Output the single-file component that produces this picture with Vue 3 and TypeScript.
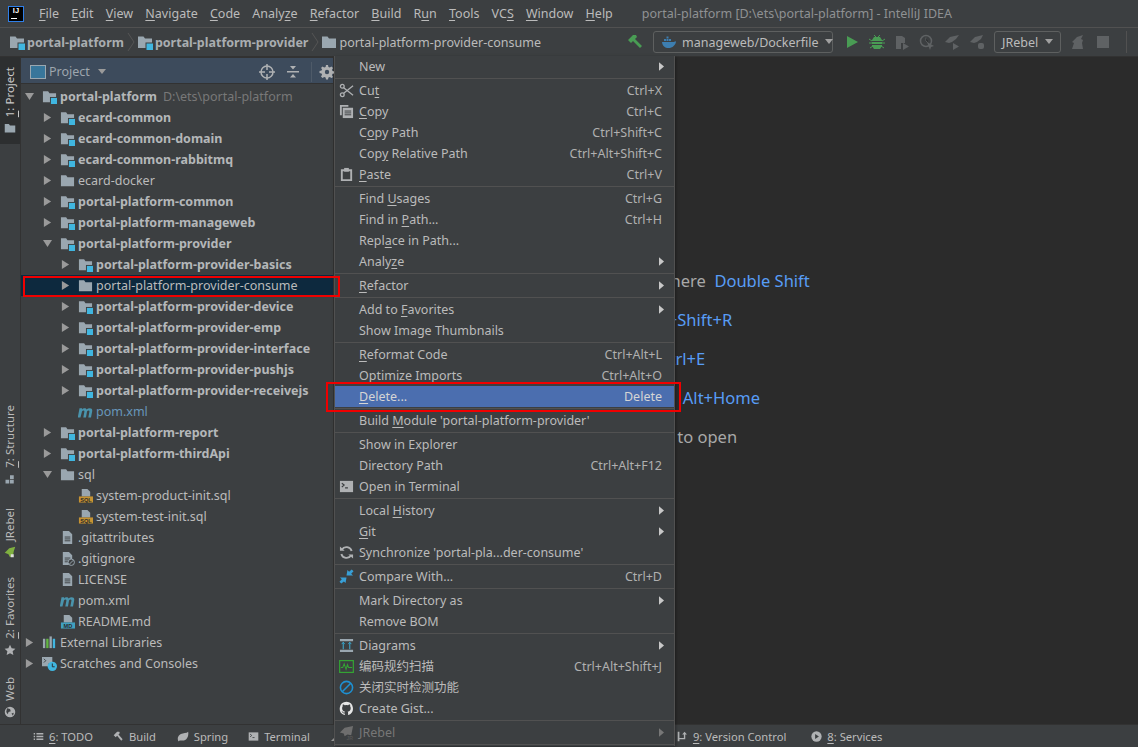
<script setup lang="ts">
// IntelliJ IDEA window with the project tree context menu open

const folder = '<path fill="#9aa7b0" d="M1 2.5h5.500l1.500 2h7V14H1z"/>'
const moduleDir = folder + '<rect x="8.500" y="8.500" width="7.500" height="7.500" fill="#3c3f41"/><rect x="9.500" y="9.500" width="6.500" height="6.500" fill="#40b6e0"/>'
const fileShape = '<path fill="#9aa7b0" d="M3 1h6.500L13 4.500V15H3z"/><path stroke="#3c3f41" d="M5 7.500h6M5 9.500h6M5 11.500h6"/>'
const tagged = (label: string, bg: string) =>
  `<path fill="#9aa7b0" d="M4 1h6l3 3v5H4z"/><rect x="1" y="9" width="15" height="6.500" fill="${bg}"/><text x="8.500" y="14.400" font-size="6" font-weight="700" text-anchor="middle" fill="#2b2b2b" font-family="Liberation Sans, sans-serif">${label}</text>`

const icons: Record<string, string> = {
  folder,
  module: moduleDir,
  file: fileShape,
  ignore: fileShape + '<circle cx="12" cy="12" r="3.400" fill="#3c3f41" stroke="#9aa7b0"/><path stroke="#9aa7b0" d="M9.800 14.200l4.400-4.400"/>',
  sql: tagged('SQL', '#c69332'),
  md: tagged('MD', '#40a0c0'),
  maven: '<path transform="translate(-1.500 -1.800) scale(1.250)" fill="#4a94ad" d="M1 13L2.500 5h2.300l-.2 1.100C5.300 5.300 6 5 6.800 5c.9 0 1.500.4 1.700 1.200C9.300 5.400 10.200 5 11.200 5c1.600 0 2.400 1 2.100 2.700L12.300 13H10l.9-4.800c.2-.8-.1-1.200-.7-1.200-.5 0-1 .3-1.300.8L8 13H5.700l.9-4.800c.2-.8-.1-1.200-.7-1.200-.5 0-1 .3-1.300.8L3.300 13z"/>',
  libs: '<path fill="#9aa7b0" d="M1 4h2.500v10H1z"/><path fill="#62b543" d="M4.500 4H7v10H4.500z"/><path fill="#9aa7b0" d="M8 1.500h2.500V14H8z"/><path fill="#40b6e0" d="M11.500 4H14v10h-2.500z"/>',
  scratch: '<path fill="#9aa7b0" d="M0 1h11v7H7v3H0z"/><path stroke="#3c3f41" fill="none" d="M2 3l2 2-2 2"/><circle cx="11" cy="11" r="5" fill="#40b6e0"/><path stroke="#2b2b2b" fill="none" d="M11 8v3.500h2.500"/>',
  cut: '<g fill="none" stroke="#afb1b3" stroke-width="1.400"><circle cx="3.500" cy="3.500" r="2"/><circle cx="3.500" cy="12.500" r="2"/><path d="M5 5l10 8M5 11L15 3"/></g>',
  copy: '<path fill="#afb1b3" d="M1 1h9v2H3v9H1z"/><path fill="#afb1b3" d="M4 4h11v11H4z"/><path stroke="#3c3f41" d="M6 7.500h7M6 9.500h7M6 11.500h7"/>',
  paste: '<path fill="none" stroke="#afb1b3" stroke-width="2" d="M3 3.500h10V14H3z"/><path fill="#afb1b3" d="M5.500 1h5v4h-5z"/>',
  terminal: '<rect x="1" y="2" width="14" height="12" fill="#afb1b3"/><path stroke="#3c3f41" stroke-width="1.200" fill="none" d="M3 4.500l2.500 2L3 8.500M6.500 9.500h3"/>',
  sync: '<g fill="none" stroke="#afb1b3" stroke-width="2"><path d="M13.500 6.500A5.800 5.800 0 0 0 3 5M2.500 9.500A5.800 5.800 0 0 0 13 11"/></g><path fill="#afb1b3" d="M1 1.500l5 4.500H1zM15 14.500L10 10h5z"/>',
  compare: '<g fill="#389fd6"><path d="M8 7l1-6 1.800 1.800L13.500.5 15.500 2.500 13 5l2 2z"/><path d="M8 9l-1 6-1.800-1.800L2.500 15.500.5 13.500 3 11 1 9z"/></g>',
  diagram: '<path fill="#9aa7b0" d="M1 1h14v2.500H1zM1 12.500h14V15H1z"/><path stroke="#40b6e0" d="M4.500 5v7M11.500 5v7M3 6.500l1.500-2 1.500 2M10 6.500l1.500-2 1.500 2"/>',
  scan: '<rect x=".7" y="1.700" width="14.600" height="12.600" fill="none" stroke="#34a334" stroke-width="1.300"/><path fill="none" stroke="#34a334" stroke-width="1.100" d="M2 9h2l1.500-4L7.500 11l1.500-5 1.200 3H14"/>',
  ban: '<circle cx="8" cy="8" r="6.500" fill="none" stroke="#1e90d2" stroke-width="1.700"/><path stroke="#1e90d2" stroke-width="1.700" d="M3.500 12.500l9-9"/>',
  github: '<path fill="#e6e6e6" d="M8 .8a7.300 7.300 0 0 0-2.300 14.200c.4.100.5-.2.5-.4v-1.300c-2 .4-2.500-1-2.500-1-.3-.8-.8-1-.8-1-.7-.4 0-.4 0-.4.700 0 1.100.7 1.100.7.600 1.100 1.700.8 2.100.6.100-.5.300-.8.500-1-1.600-.2-3.300-.8-3.300-3.600 0-.8.300-1.500.7-2-.1-.2-.3-.9.100-1.900 0 0 .6-.2 2 .7a7 7 0 0 1 3.600 0c1.400-.9 2-.7 2-.7.400 1 .2 1.700.1 1.900.5.500.7 1.200.7 2 0 2.800-1.700 3.400-3.300 3.600.3.200.5.700.5 1.300v2c0 .2.100.5.500.4A7.300 7.300 0 0 0 8 .8z"/>',
  rebel: '<path fill="#6e6e6e" d="M15 1L6 3 1 8l4 1 1 3 3-2 4 1z"/><text x="8" y="15.500" font-size="5.500" fill="#555" font-weight="700" font-family="Liberation Sans, sans-serif">JR</text>',
}

const menuBar = [
  ['File', 0], ['Edit', 0], ['View', 0], ['Navigate', 0], ['Code', 0], ['Analyze', 5],
  ['Refactor', 0], ['Build', 0], ['Run', 1], ['Tools', 0], ['VCS', 2], ['Window', 0], ['Help', 0],
] as [string, number][]

interface TreeRow { label: string; level: number; icon: string; open?: boolean; closed?: boolean; bold?: boolean; hint?: string; selected?: boolean; blue?: boolean }

const closedModule = (label: string, level: number): TreeRow => ({ label, level, icon: 'module', closed: true, bold: true })

const tree: TreeRow[] = [
  { label: 'portal-platform', level: 0, icon: 'module', open: true, bold: true, hint: 'D:\\ets\\portal-platform' },
  closedModule('ecard-common', 1),
  closedModule('ecard-common-domain', 1),
  closedModule('ecard-common-rabbitmq', 1),
  { label: 'ecard-docker', level: 1, icon: 'folder', closed: true },
  closedModule('portal-platform-common', 1),
  closedModule('portal-platform-manageweb', 1),
  { label: 'portal-platform-provider', level: 1, icon: 'module', open: true, bold: true },
  closedModule('portal-platform-provider-basics', 2),
  { label: 'portal-platform-provider-consume', level: 2, icon: 'folder', closed: true, selected: true },
  closedModule('portal-platform-provider-device', 2),
  closedModule('portal-platform-provider-emp', 2),
  closedModule('portal-platform-provider-interface', 2),
  closedModule('portal-platform-provider-pushjs', 2),
  closedModule('portal-platform-provider-receivejs', 2),
  { label: 'pom.xml', level: 2, icon: 'maven', blue: true },
  closedModule('portal-platform-report', 1),
  closedModule('portal-platform-thirdApi', 1),
  { label: 'sql', level: 1, icon: 'folder', open: true },
  { label: 'system-product-init.sql', level: 2, icon: 'sql' },
  { label: 'system-test-init.sql', level: 2, icon: 'sql' },
  { label: '.gitattributes', level: 1, icon: 'file' },
  { label: '.gitignore', level: 1, icon: 'ignore' },
  { label: 'LICENSE', level: 1, icon: 'file' },
  { label: 'pom.xml', level: 1, icon: 'maven' },
  { label: 'README.md', level: 1, icon: 'md' },
  { label: 'External Libraries', level: 0, icon: 'libs', closed: true },
  { label: 'Scratches and Consoles', level: 0, icon: 'scratch', closed: true },
]

interface MenuRow { label?: string; key?: number; keys?: string; icon?: string; sub?: boolean; active?: boolean; off?: boolean; sep?: boolean }

const sep: MenuRow = { sep: true }
const contextMenu: MenuRow[] = [
  { label: 'New', sub: true },
  sep,
  { label: 'Cut', key: 2, keys: 'Ctrl+X', icon: 'cut' },
  { label: 'Copy', key: 0, keys: 'Ctrl+C', icon: 'copy' },
  { label: 'Copy Path', key: 1, keys: 'Ctrl+Shift+C' },
  { label: 'Copy Relative Path', key: 3, keys: 'Ctrl+Alt+Shift+C' },
  { label: 'Paste', key: 0, keys: 'Ctrl+V', icon: 'paste' },
  sep,
  { label: 'Find Usages', key: 5, keys: 'Ctrl+G' },
  { label: 'Find in Path...', key: 8, keys: 'Ctrl+H' },
  { label: 'Replace in Path...', key: 4 },
  { label: 'Analyze', key: 5, sub: true },
  sep,
  { label: 'Refactor', key: 0, sub: true },
  sep,
  { label: 'Add to Favorites', key: 7, sub: true },
  { label: 'Show Image Thumbnails' },
  sep,
  { label: 'Reformat Code', key: 0, keys: 'Ctrl+Alt+L' },
  { label: 'Optimize Imports', key: 1, keys: 'Ctrl+Alt+O' },
  { label: 'Delete...', key: 0, keys: 'Delete', active: true },
  sep,
  { label: "Build Module 'portal-platform-provider'", key: 6 },
  sep,
  { label: 'Show in Explorer' },
  { label: 'Directory Path', keys: 'Ctrl+Alt+F12' },
  { label: 'Open in Terminal', icon: 'terminal' },
  sep,
  { label: 'Local History', key: 6, sub: true },
  { label: 'Git', key: 0, sub: true },
  { label: "Synchronize 'portal-pla...der-consume'", icon: 'sync' },
  sep,
  { label: 'Compare With...', keys: 'Ctrl+D', icon: 'compare' },
  sep,
  { label: 'Mark Directory as', sub: true },
  { label: 'Remove BOM' },
  sep,
  { label: 'Diagrams', sub: true, icon: 'diagram' },
  { label: '编码规约扫描', keys: 'Ctrl+Alt+Shift+J', icon: 'scan' },
  { label: '关闭实时检测功能', icon: 'ban' },
  { label: 'Create Gist...', icon: 'github' },
  sep,
  { label: 'JRebel', sub: true, off: true, icon: 'rebel' },
  sep,
]

const hints = [
  ['Search Everywhere', 'Double Shift'],
  ['Go to File', 'Ctrl+Shift+R'],
  ['Recent Files', 'Ctrl+E'],
  ['Navigation Bar', 'Alt+Home'],
  ['Drop files here to open', ''],
]

function split(label: string, key?: number) {
  if (key === undefined) return [label, '', '']
  return [label.slice(0, key), label[key], label.slice(key + 1)]
}
</script>

<template>
  <div class="ide">
    <header class="menubar">
      <div class="logo"><span>IJ</span><i></i></div>
      <nav class="menus">
        <span v-for="[name, key] in menuBar" :key="name">{{ split(name, key)[0] }}<u>{{ split(name, key)[1] }}</u>{{ split(name, key)[2] }}</span>
      </nav>
      <div class="title">portal-platform [D:\ets\portal-platform] - IntelliJ IDEA</div>
    </header>

    <div class="navbar">
      <div class="crumbs">
        <svg class="ic" viewBox="0 0 16 16" v-html="icons.module"></svg>
        <b>portal-platform</b>
        <svg class="chev" viewBox="0 0 8 20"><path d="M1 1l6 9-6 9" fill="none" stroke="#555"/></svg>
        <svg class="ic" viewBox="0 0 16 16" v-html="icons.module"></svg>
        <b>portal-platform-provider</b>
        <svg class="chev" viewBox="0 0 8 20"><path d="M1 1l6 9-6 9" fill="none" stroke="#555"/></svg>
        <svg class="ic" viewBox="0 0 16 16" v-html="icons.folder"></svg>
        <span>portal-platform-provider-consume</span>
      </div>
      <div class="tools">
        <svg class="ic hammer" viewBox="0 0 16 16"><path fill="#499c54" d="M1 6l5-5h3l1 2-2 2 7 7-2 2-7-7-2 2z"/></svg>
        <div class="combo run">
          <svg class="ic" viewBox="0 0 16 16"><path fill="#3d7eb0" d="M1 8h11c1 0 1.500-.8 3-.8-.3 3.800-3.500 6.800-7.500 6.800C4 14 1.500 12 1 8z"/><path fill="#3d7eb0" d="M3 5h2v2H3zM5.500 5h2v2h-2zM8 5h2v2H8zM5.500 2.500h2v2h-2z"/></svg>
          <span>manageweb/Dockerfile</span>
          <svg class="drop" viewBox="0 0 10 6"><path d="M1 0h8L5 5z" fill="#a0a0a0"/></svg>
        </div>
        <svg class="ic play" viewBox="0 0 16 16"><path fill="#499c54" d="M3 2l11 6-11 6z"/></svg>
        <svg class="ic bug" viewBox="0 0 16 16"><path fill="#499c54" d="M5 3h6l2 3v6l-2 3H5l-2-3V6z"/><path stroke="#499c54" d="M0 5l3 2M16 5l-3 2M0 9h3M16 9h-3M1 14l3-2M15 14l-3-2M5 1l2 2M11 1L9 3"/><path stroke="#3c3f41" d="M3 7.500h10M3 10.500h10"/></svg>
        <svg class="ic" viewBox="0 0 16 16"><path fill="#5f6264" d="M2 2h6l3 2v5H7v6H2z"/><path fill="#5f6264" d="M9 9l6 3.500-6 3.500z"/></svg>
        <svg class="ic" viewBox="0 0 16 16"><circle cx="7" cy="7" r="5.500" fill="none" stroke="#5f6264" stroke-width="1.500"/><path stroke="#5f6264" d="M7 3.500V7l2 1.500"/><path fill="#5f6264" d="M8 8l7 4-3 1-1 3z"/></svg>
        <svg class="ic" viewBox="0 0 16 16"><path fill="#5f6264" d="M15 1L6 3 1 8l4 1 3-1 4-3z"/><path fill="#5f6264" d="M9 9l6 3.500-6 3.500z"/></svg>
        <svg class="ic" viewBox="0 0 16 16"><path fill="#5f6264" d="M14 1L6 3 1 8l4 1 3-1 4-3z"/><rect x="9" y="9" width="6" height="6" rx="2" fill="#5f6264"/></svg>
        <div class="combo rebel">
          <span>JRebel</span>
          <svg class="drop" viewBox="0 0 10 6"><path d="M1 0h8L5 5z" fill="#a0a0a0"/></svg>
        </div>
        <svg class="ic" viewBox="0 0 16 16"><path fill="#5f6264" d="M13 1L7 3 2 8l2 1-2 6h11l-1-6 1-3-2-1z"/></svg>
        <svg class="ic stop" viewBox="0 0 16 16"><rect x="2" y="2" width="12" height="12" fill="#5f6264"/></svg>
        <i class="tool-sep"></i>
      </div>
    </div>

    <div class="body">
      <aside class="stripe">
        <div class="side-tab active">
          <span class="vert"><u>1</u>: Project</span>
          <svg class="ic small" viewBox="0 0 16 16" v-html="icons.folder"></svg>
        </div>
        <div class="side-tab structure">
          <span class="vert"><u>7</u>: Structure</span>
          <svg class="ic small" viewBox="0 0 16 16"><path fill="#9aa7b0" d="M8 3h5v5H8zM2 9h5v5H2zM8 9h5v5H8z"/></svg>
        </div>
        <div class="side-tab jrebel">
          <span class="vert">JRebel</span>
          <svg class="ic small" viewBox="0 0 16 16"><path fill="#7fb040" d="M15 1L7 3 1 9l5 2 2 4 4-2 1-6z"/><rect x="9" y="11" width="4" height="4" fill="#ddd"/></svg>
        </div>
        <div class="side-tab favorites">
          <span class="vert"><u>2</u>: Favorites</span>
          <svg class="ic small" viewBox="0 0 16 16"><path fill="#afb1b3" d="M8 1l2.200 4.700 5 .6-3.700 3.400 1 5L8 12.200 3.500 14.700l1-5L.8 6.300l5-.6z"/></svg>
        </div>
        <div class="side-tab web">
          <span class="vert">Web</span>
          <svg class="ic small" viewBox="0 0 16 16"><circle cx="8" cy="8" r="7" fill="#afb1b3"/><path fill="#3c3f41" d="M4 3l4 1 1 3-3 1-1 3-2-3zM10 10l3-1-1 4z"/></svg>
        </div>
      </aside>

      <section class="project">
        <div class="panel-head">
          <svg class="ic" viewBox="0 0 16 16"><rect x=".5" y="1.500" width="15" height="13" fill="#3592c4" fill-opacity=".6" stroke="#9aa7b0"/></svg>
          <span class="panel-title">Project</span>
          <svg class="drop" viewBox="0 0 10 6"><path d="M1 0h8L5 5z" fill="#9a9a9a"/></svg>
          <span class="grow"></span>
          <svg class="ic head-ic" viewBox="0 0 16 16"><circle cx="8" cy="8" r="6" fill="none" stroke="#afb1b3" stroke-width="1.500"/><path stroke="#afb1b3" stroke-width="1.500" d="M8 0v6M8 10v6M0 8h6M10 8h6"/></svg>
          <svg class="ic head-ic" viewBox="0 0 16 16"><path fill="#afb1b3" d="M2 7h12v1.500H2zM5 2h6L8 5.500zM5 13.500h6L8 10z"/></svg>
          <i class="head-sep"></i>
          <svg class="ic gear" viewBox="0 0 16 16"><path fill="#afb1b3" d="M7 1h2l.4 2 1.400.6L12.500 2.500 14 4l-1.100 1.700.6 1.300 2 .4v2l-2 .4-.6 1.400 1.100 1.700L12.500 14l-1.700-1.100-1.400.6-.4 2H7l-.4-2-1.400-.6L3.500 14 2 12.500l1.100-1.700-.6-1.400-2-.4v-2l2-.4.6-1.300L2 4l1.500-1.500 1.700 1.100 1.400-.6z"/><circle cx="8" cy="8" r="2.200" fill="#3d4b5c"/></svg>
        </div>
        <div class="tree">
          <div
            v-for="row in tree"
            :key="row.label + row.level"
            class="row"
            :class="{ selected: row.selected }"
            :style="{ paddingLeft: 4 + row.level * 18 + 'px' }"
          >
            <svg v-if="row.closed" class="arrow" viewBox="0 0 10 10"><path d="M1 0l8 5-8 5z" fill="#9a9a9a"/></svg>
            <svg v-else-if="row.open" class="arrow" viewBox="0 0 10 10"><path d="M0 1h10L5 9z" fill="#9a9a9a"/></svg>
            <span v-else class="arrow"></span>
            <svg class="ic tree-ic" viewBox="0 0 16 16" v-html="icons[row.icon]"></svg>
            <span :class="{ strong: row.bold, blue: row.blue }">{{ row.label }}</span>
            <span v-if="row.hint" class="hint">{{ row.hint }}</span>
          </div>
        </div>
      </section>

      <main class="editor">
        <p v-for="[what, shortcut] in hints" :key="what">
          <span>{{ what }}</span><em>{{ shortcut }}</em>
        </p>
      </main>
    </div>

    <footer class="statusbar">
      <div class="tool">
        <svg class="ic small" viewBox="0 0 16 16"><path fill="#afb1b3" d="M1 3h2v2H1zM1 7h2v2H1zM1 11h2v2H1zM5 3h10v2H5zM5 7h10v2H5zM5 11h10v2H5z"/></svg>
        <span><u>6</u>: TODO</span>
      </div>
      <div class="tool">
        <svg class="ic small" viewBox="0 0 16 16"><path fill="#afb1b3" d="M1 6l5-5h3l1 2-2 2 6 7-2 2-6-7-2 2z"/></svg>
        <span>Build</span>
      </div>
      <div class="tool">
        <svg class="ic spring" viewBox="0 0 16 16"><path fill="#afb1b3" d="M15 2c1 6-2 11-7 11-2 0-4-.5-5 1-1.500-3-1-7 3-9 3-1.500 7-1 9-3z"/></svg>
        <span>Spring</span>
      </div>
      <div class="tool">
        <svg class="ic small" viewBox="0 0 16 16" v-html="icons.terminal"></svg>
        <span>Terminal</span>
      </div>
      <svg class="corner" viewBox="0 0 6 6"><path d="M6 0v6H0z" fill="#9a9a9a"/></svg>
      <div class="tool vcs">
        <svg class="ic small" viewBox="0 0 16 16"><path fill="#afb1b3" d="M1 1h2.500v14H1zM3.500 10H10V5H7.500L11 1l3.500 4H12v7H3.500z"/></svg>
        <span><u>9</u>: Version Control</span>
      </div>
      <div class="tool">
        <svg class="ic small" viewBox="0 0 16 16"><circle cx="8" cy="8" r="7.500" fill="#afb1b3"/><path fill="#3c3f41" d="M6 4.500l5.500 3.500L6 11.500z"/></svg>
        <span><u>8</u>: Services</span>
      </div>
    </footer>

    <!-- popup and the annotation boxes drawn over the screenshot -->
    <div class="popup">
      <template v-for="(item, i) in contextMenu" :key="i">
        <div v-if="item.sep" class="popup-sep"></div>
        <div v-else class="popup-row" :class="{ active: item.active, off: item.off }">
          <span class="popup-icon">
            <svg v-if="item.icon" class="ic" viewBox="0 0 16 16" v-html="icons[item.icon]"></svg>
          </span>
          <span class="popup-label">{{ split(item.label!, item.key)[0] }}<u>{{ split(item.label!, item.key)[1] }}</u>{{ split(item.label!, item.key)[2] }}</span>
          <span v-if="item.keys" class="popup-keys">{{ item.keys }}</span>
          <svg v-if="item.sub" class="popup-sub" viewBox="0 0 6 10"><path d="M0 0l6 5-6 5z" :fill="item.off ? '#777' : '#c8c8c8'"/></svg>
        </div>
      </template>
    </div>
    <div class="mark mark-tree"></div>
    <div class="mark mark-delete"></div>
  </div>
</template>

<style>
html, body { margin: 0; background: #3c3f41; }
</style>

<style scoped>
.ide {
  position: relative;
  display: flex;
  flex-direction: column;
  width: 1138px;
  height: 747px;
  overflow: hidden;
  background: #3c3f41;
  color: #bbbbbb;
  font: 12.5px "Noto Sans", "Noto Sans CJK SC", sans-serif;
  line-height: 21px;
}
.ic { width: 16px; height: 16px; flex: none; display: block; }
.ic.small { width: 11px; height: 11px; }
.ic.spring { width: 13px; height: 13px; }
.drop { width: 10px; height: 6px; flex: none; }
.grow { flex: 1; }
u { text-underline-offset: 2px; }

.menubar {
  display: flex;
  align-items: center;
  height: 28px;
  flex: none;
  border-bottom: 1px solid #515151;
  box-sizing: border-box;
}
.logo {
  position: relative;
  box-sizing: border-box;
  width: 16px;
  height: 16px;
  margin-left: 8px;
  background: #000;
  border: 1px solid #2f7fe8;
  color: #fff;
  font: 700 7.5px/8px "Liberation Sans", sans-serif;
  text-align: center;
}
.logo i { position: absolute; left: 2px; bottom: 2px; width: 6px; height: 1px; background: #fff; }
.menus { display: flex; gap: 12.2px; margin-left: 15px; }
.title { margin-left: 29px; color: #8f9193; }

.navbar {
  display: flex;
  align-items: center;
  justify-content: space-between;
  height: 29px;
  flex: none;
  box-sizing: border-box;
  border-bottom: 1px solid #323232;
  padding-left: 9px;
}
.crumbs { display: flex; align-items: center; }
.crumbs b { margin-left: 2px; font-weight: 700; color: #a9adb0; }
.crumbs span { margin-left: 2px; }
.chev { width: 8px; height: 20px; margin: 0 2px 0 3px; }
.tools { display: flex; align-items: center; gap: 9px; padding-right: 11px; }
.hammer { margin-right: 1px; }
.combo {
  display: flex;
  align-items: center;
  gap: 5px;
  box-sizing: border-box;
  height: 22px;
  border: 1px solid #5e6060;
  border-radius: 3px;
  padding: 0 6px 0 7px;
}
.combo.run { width: 180px; justify-content: space-between; margin-right: 2px; }
.combo.rebel { width: 67px; justify-content: space-between; }
.tool-sep { width: 1px; height: 22px; background: #515151; margin-left: 6px; }

.body { display: flex; flex: 1; min-height: 0; }
.stripe {
  display: flex;
  flex-direction: column;
  align-items: stretch;
  width: 21px;
  flex: none;
  border-right: 1px solid #323232;
  box-sizing: border-box;
  font-size: 11.5px;
}
.stripe .ic.small { width: 12px; height: 12px; }
.side-tab { display: flex; flex-direction: column; align-items: center; gap: 5px; padding: 7px 0 5px; }
.side-tab.active { background: #2d2f30; color: #c8c8c8; padding: 10px 0; }
.structure { margin-top: 254px; }
.jrebel { margin-top: 11px; }
.favorites { margin-top: 7px; }
.web { margin-top: 9px; }
.vert { writing-mode: vertical-rl; transform: rotate(180deg); line-height: 20px; white-space: nowrap; }

.project { width: 313px; flex: none; border-right: 1px solid #323232; box-sizing: border-box; }
.panel-head {
  display: flex;
  align-items: center;
  gap: 7px;
  height: 27px;
  box-sizing: border-box;
  padding: 2px 0 0 9px;
  background: #3d4b5c;
  border-bottom: 1px solid #323232;
  border-top: 1px solid #323232;
}
.panel-title { color: #9ea6ae; margin-left: -4px; }
.head-ic { margin-right: 3px; }
.head-sep { width: 1px; height: 20px; background: #4e5a68; }
.gear { margin-right: -2px; }

.tree { padding-top: 2px; }
.row { display: flex; align-items: center; height: 21px; white-space: nowrap; }
.row.selected { background: #0d293e; }
.arrow { width: 9px; height: 9px; flex: none; margin-right: 8px; }
.tree-ic { width: 15px; height: 15px; margin-right: 3px; }
.strong { font-weight: 700; color: #b4b7b9; }
.blue { color: #6897bb; }
.hint { margin-left: 6px; color: #787878; }

.editor { flex: 1; background: #2b2b2b; padding: 204px 0 0 225px; font-size: 16.5px; color: #a8a8a8; }
.editor p { margin: 0; height: 39px; line-height: 39px; white-space: nowrap; }
.editor em { font-style: normal; color: #589df6; margin-left: 8.5px; }

.statusbar {
  display: flex;
  align-items: center;
  height: 23px;
  flex: none;
  box-sizing: border-box;
  border-top: 1px solid #323232;
  padding-left: 33px;
  font-size: 11.2px;
}
.tool { display: flex; align-items: center; gap: 5px; margin-right: 20px; white-space: nowrap; }
.corner { width: 5px; height: 5px; margin: 5px 0 0 1px; }
.vcs { margin-left: 341px; margin-right: 25px; }

.popup {
  position: absolute;
  left: 334px;
  top: 56px;
  width: 341px;
  box-sizing: border-box;
  background: #3c3f41;
  border: 1px solid #515151;
  border-width: 0 1px;
  box-shadow: 1px 1px 3px rgba(0, 0, 0, .35);
}
.popup-sep { height: 1px; background: #515151; margin: 1px 0; }
.popup-row { display: flex; align-items: center; height: 21px; padding-right: 12px; white-space: nowrap; }
.popup-icon { width: 24px; flex: none; display: flex; justify-content: flex-end; padding-right: 5px; box-sizing: border-box; }
.popup-icon .ic { width: 15px; height: 15px; }
.popup-label { flex: 1; }
.popup-keys { color: #b0b0b0; }
.popup-sub { width: 5px; height: 9px; margin-right: -2px; }
.popup-row.active { background: #4b6eaf; color: #d5d5d5; }
.popup-row.active .popup-keys { color: #d5d5d5; }
.popup-row.off { color: #777777; }

.mark { position: absolute; box-sizing: border-box; border: 2px solid #f00000; pointer-events: none; }
.mark-tree { left: 23px; top: 276px; width: 317px; height: 21px; }
.mark-delete { left: 326px; top: 382px; width: 355px; height: 30px; }
</style>
